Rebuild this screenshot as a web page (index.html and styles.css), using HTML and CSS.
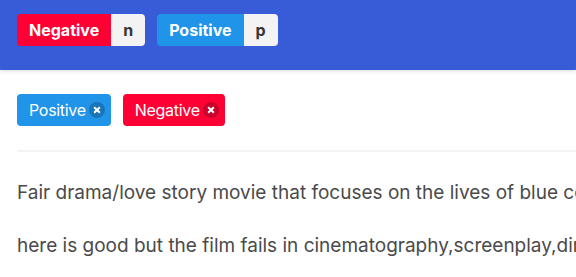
FILE: index.html
```html
<!DOCTYPE html>
<html lang="en">
<head>
    <meta charset="UTF-8">
    <meta name="viewport" content="width=device-width, initial-scale=1.0">
    <title>Sentiment labels</title>
    <link rel="stylesheet" href="styles.css">
</head>

<body>
    <header class="navbar">
        <div class="tags has-addons">
            <span class="tag is-danger is-bold">Negative</span>
            <span class="tag is-light">n</span>
        </div>
        <div class="tags has-addons">
            <span class="tag is-info is-bold">Positive</span>
            <span class="tag is-light">p</span>
        </div>
    </header>

    <section class="content">
        <div class="selected">
            <span class="tag is-info">Positive <button class="delete"></button></span>
            <span class="tag is-danger">Negative <button class="delete"></button></span>
        </div>

        <hr>

        <div class="review">
            <p>Fair drama/love story movie that focuses on the lives of blue collar</p>
            <p>here is good but the film fails in cinematography,screenplay,directing</p>
        </div>
    </section>
</body>
</html>
```

FILE: styles.css
```css
/* Sentiment labelling page */
* {
   box-sizing: border-box;
}

body {
   margin: 0;
   font-family: Inter, "Noto Sans", sans-serif;
   color: #4a4a4a;
   background: #fff;
   overflow: hidden;
}

.navbar {
   display: flex;
   gap: 12px;
   height: 70px;
   padding: 14px 17px 0;
   background-color: #385bd7;
   box-shadow: 0 2px 3px rgba(10, 10, 10, 0.1);
}

.tags {
   display: flex;
   align-items: center;
   gap: 12px;
}

.tags.has-addons {
   gap: 0;
   align-self: flex-start;
}

.tag {
   display: inline-flex;
   align-items: center;
   height: 32px;
   padding: 0 12px;
   border-radius: 4px;
   font-size: 16px;
   line-height: 1;
   white-space: nowrap;
}

.tag.is-bold {
   font-weight: 700;
}

.tags.has-addons .tag:first-child {
   border-radius: 4px 0 0 4px;
}

.tags.has-addons .tag:last-child {
   border-radius: 0 4px 4px 0;
}

.tag.is-danger {
   background-color: #ff0035;
   color: #fff;
}

.tag.is-info {
   background-color: #1f94e9;
   color: #fff;
}

.tag.is-light {
   background-color: #f3f3f3;
   color: #363636;
   font-weight: 700;
}

.content {
   padding: 24px 0 0 17px;
}

.selected {
   display: flex;
   gap: 12px;
}

.selected .tag {
   letter-spacing: -0.3px;
}

.delete {
   appearance: none;
   position: relative;
   flex: none;
   width: 16px;
   height: 16px;
   min-width: 16px;
   margin: 0 -6px 0 3px;
   padding: 0;
   border: none;
   border-radius: 50%;
   background-color: rgba(10, 10, 10, 0.22);
   cursor: pointer;
}

.delete::before,
.delete::after {
   content: "";
   position: absolute;
   left: 50%;
   top: 50%;
   background-color: #fff;
   transform: translate(-50%, -50%) rotate(45deg);
}

.delete::before {
   width: 8px;
   height: 2px;
}

.delete::after {
   width: 2px;
   height: 8px;
}

hr {
   height: 2px;
   margin: 24px 0 0;
   border: none;
   background-color: #f3f3f3;
}

.review {
   padding-top: 14px;
   overflow: hidden;
}

.review p {
   margin: 0;
   font-size: 19px;
   line-height: 53px;
   white-space: nowrap;
}
```
